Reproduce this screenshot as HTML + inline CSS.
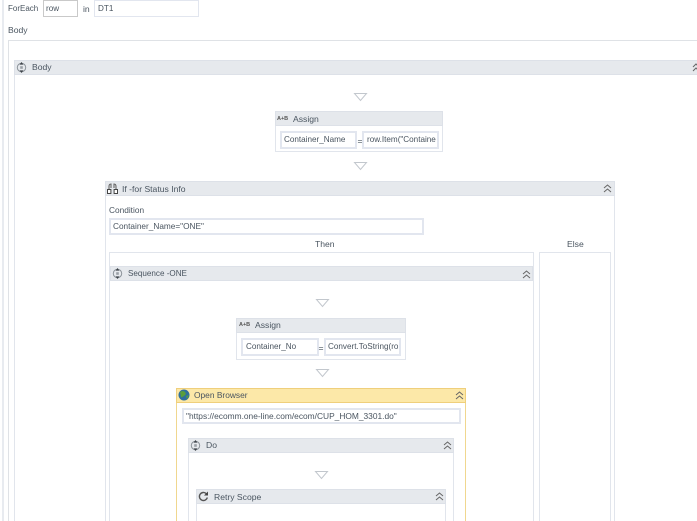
<!DOCTYPE html>
<html><head><meta charset="utf-8">
<style>
html,body{margin:0;padding:0;background:#fff}
#p{position:relative;width:697px;height:521px;overflow:hidden;background:#fff;font-family:"Liberation Sans",sans-serif;font-size:8.6px;color:#4a5560}
#p div{position:absolute;box-sizing:border-box}
.t{white-space:nowrap;line-height:12px;height:12px}
.box{border:1px solid #e1e5ec;background:#fff}
.hd{background:#e6e9ed;border:1px solid #dde1e8}
.in{border:2px solid #e2e6ef;background:#fff;white-space:nowrap;overflow:hidden;line-height:14px;padding-left:2px;font-size:8.15px}
svg{position:absolute;overflow:visible}
</style></head><body><div id="p">
<div style="left:2px;top:0;width:2px;height:521px;background:#e8ebf0"></div>
<div class="t" style="left:8px;top:3px;font-size:8px">ForEach</div>
<div class="in" style="left:43px;top:0;width:35px;height:17px;border:1px solid #c9c9c9;padding-left:2px;line-height:15px">row</div>
<div class="t" style="left:83px;top:3px">in</div>
<div class="in" style="left:94px;top:0;width:105px;height:17px;line-height:15px;padding-left:3px;border-width:1px">DT1</div>
<div class="t" style="left:8px;top:24px">Body</div>
<div class="box" style="left:8px;top:40px;width:700px;height:500px;border-color:#dfe2e6"></div>

<div class="box" style="left:14px;top:60px;width:700px;height:480px"></div>
<div class="hd" style="left:14px;top:60px;width:700px;height:15px"></div>
<svg style="left:16px;top:62px" width="11" height="11" viewBox="0 0 11 11"><circle cx="5.5" cy="5.5" r="4.2" fill="none" stroke="#8d949b"/><path d="M5.5 0L3.6 2.6H7.4ZM5.5 11L3.6 8.4H7.4Z" fill="#3c4248"/><rect x="4.2" y="4.2" width="2.6" height="2.6" fill="#9aa0a6"/></svg>
<div class="t" style="left:32px;top:61px">Body</div>
<svg style="left:693px;top:63px" width="6" height="9"><path d="M0 4L3 1L6 4M0 8L3 5L6 8" fill="none" stroke="#666"/></svg>

<svg style="left:354px;top:93px" width="13" height="9"><path d="M.5.5H12.5L6.5 7.5Z" fill="#fff" stroke="#c2c7cd"/></svg>

<div class="box" style="left:275px;top:111px;width:168px;height:41px"></div>
<div class="hd" style="left:275px;top:111px;width:168px;height:15px"></div>
<div class="t" style="left:277px;top:113px;font-size:5.5px;font-weight:bold;color:#555">A+B</div>
<div class="t" style="left:293px;top:113px">Assign</div>
<div class="in" style="left:280px;top:131px;width:77px;height:18px;padding-left:2px">Container_Name</div>
<div class="t" style="left:357px;top:135px;width:6px;text-align:center">=</div>
<div class="in" style="left:362px;top:131px;width:77px;height:18px;padding-left:3px">row.Item("Containe</div>

<svg style="left:354px;top:162px" width="13" height="9"><path d="M.5.5H12.5L6.5 7.5Z" fill="#fff" stroke="#c2c7cd"/></svg>

<div class="box" style="left:105px;top:181px;width:510px;height:360px"></div>
<div class="hd" style="left:105px;top:181px;width:510px;height:15px"></div>
<svg style="left:107px;top:183px" width="11" height="11" viewBox="0 0 11 11"><path d="M2 7V3.5Q2 1 4 1V5M9 7V3.5Q9 1 7 1V5" fill="none" stroke="#666" stroke-width="1.1"/><rect x=".5" y="6.5" width="3.4" height="4" fill="#fff" stroke="#444"/><rect x="7.1" y="6.5" width="3.4" height="4" fill="#fff" stroke="#444"/></svg>
<div class="t" style="left:122px;top:183px">If -for Status Info</div>
<svg style="left:604px;top:184px" width="7" height="9"><path d="M0 4L3.5 1L7 4M0 8L3.5 5L7 8" fill="none" stroke="#666"/></svg>
<div class="t" style="left:109px;top:204px;font-size:8.3px">Condition</div>
<div class="in" style="left:109px;top:218px;width:315px;height:17px;padding-left:2px;line-height:14px;font-size:8.25px">Container_Name="ONE"</div>
<div class="t" style="left:315px;top:238px">Then</div>
<div class="t" style="left:567px;top:238px">Else</div>
<div class="box" style="left:109px;top:252px;width:425px;height:290px"></div>
<div class="box" style="left:539px;top:252px;width:72px;height:290px"></div>

<div class="hd" style="left:110px;top:266px;width:423px;height:15px"></div>
<svg style="left:112px;top:268px" width="11" height="11" viewBox="0 0 11 11"><circle cx="5.5" cy="5.5" r="4.2" fill="none" stroke="#8d949b"/><path d="M5.5 0L3.6 2.6H7.4ZM5.5 11L3.6 8.4H7.4Z" fill="#3c4248"/><rect x="4.2" y="4.2" width="2.6" height="2.6" fill="#9aa0a6"/></svg>
<div class="t" style="left:128px;top:268px;font-size:8.1px">Sequence -ONE</div>
<svg style="left:523px;top:270px" width="7" height="9"><path d="M0 4L3.5 1L7 4M0 8L3.5 5L7 8" fill="none" stroke="#666"/></svg>

<svg style="left:316px;top:299px" width="13" height="9"><path d="M.5.5H12.5L6.5 7.5Z" fill="#fff" stroke="#c2c7cd"/></svg>

<div class="box" style="left:236px;top:318px;width:170px;height:42px"></div>
<div class="hd" style="left:236px;top:318px;width:170px;height:15px"></div>
<div class="t" style="left:239px;top:319px;font-size:5.5px;font-weight:bold;color:#555">A+B</div>
<div class="t" style="left:255px;top:319px">Assign</div>
<div class="in" style="left:241px;top:338px;width:78px;height:18px;padding-left:3px">Container_No</div>
<div class="t" style="left:318px;top:342px;width:6px;text-align:center">=</div>
<div class="in" style="left:324px;top:338px;width:77px;height:18px;padding-left:2px">Convert.ToString(ro</div>

<svg style="left:316px;top:369px" width="13" height="9"><path d="M.5.5H12.5L6.5 7.5Z" fill="#fff" stroke="#c2c7cd"/></svg>

<div class="box" style="left:176px;top:388px;width:290px;height:150px;border-color:#f0d78f"></div>
<div class="hd" style="left:176px;top:388px;width:290px;height:15px;background:#fce8a8;border-color:#efcf7c"></div>
<svg style="left:178px;top:389px" width="12" height="12" viewBox="0 0 12 12"><circle cx="6" cy="6" r="5.5" fill="#2f6f9e"/><path d="M2 3Q5 1 7 3T6 7T3 8ZM8 7L11 6L9 10Z" fill="#5a9e3c"/></svg>
<div class="t" style="left:194px;top:389px;font-size:8.4px">Open Browser</div>
<svg style="left:456px;top:391px" width="7" height="9"><path d="M0 4L3.5 1L7 4M0 8L3.5 5L7 8" fill="none" stroke="#666"/></svg>
<div class="in" style="left:182px;top:408px;width:279px;height:16px;padding-left:2px;line-height:13px;font-size:8.4px">"https://ecomm.one-line.com/ecom/CUP_HOM_3301.do"</div>

<div class="box" style="left:188px;top:438px;width:266px;height:100px"></div>
<div class="hd" style="left:188px;top:438px;width:266px;height:15px"></div>
<svg style="left:190px;top:440px" width="11" height="11" viewBox="0 0 11 11"><circle cx="5.5" cy="5.5" r="4.2" fill="none" stroke="#8d949b"/><path d="M5.5 0L3.6 2.6H7.4ZM5.5 11L3.6 8.4H7.4Z" fill="#3c4248"/><rect x="4.2" y="4.2" width="2.6" height="2.6" fill="#9aa0a6"/></svg>
<div class="t" style="left:206px;top:439px">Do</div>
<svg style="left:444px;top:441px" width="7" height="9"><path d="M0 4L3.5 1L7 4M0 8L3.5 5L7 8" fill="none" stroke="#666"/></svg>

<svg style="left:315px;top:471px" width="13" height="9"><path d="M.5.5H12.5L6.5 7.5Z" fill="#fff" stroke="#c2c7cd"/></svg>

<div class="box" style="left:196px;top:489px;width:250px;height:50px"></div>
<div class="hd" style="left:196px;top:489px;width:250px;height:15px"></div>
<svg style="left:198px;top:491px" width="11" height="11" viewBox="0 0 11 11"><path d="M9.3 6.5A4 4 0 1 1 8.2 2.6" fill="none" stroke="#555" stroke-width="1.4"/><path d="M10 0.5V4.5H6Z" fill="#444"/></svg>
<div class="t" style="left:214px;top:491px">Retry Scope</div>
<svg style="left:436px;top:492px" width="7" height="9"><path d="M0 4L3.5 1L7 4M0 8L3.5 5L7 8" fill="none" stroke="#666"/></svg>
</div></body></html>
